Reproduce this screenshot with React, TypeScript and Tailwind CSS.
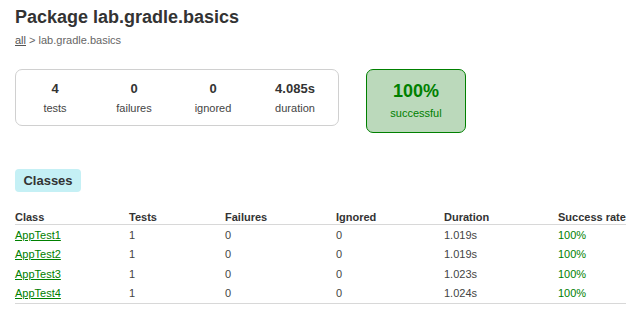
import React from 'react';

const rows = [
  { name: 'AppTest1', tests: 1, failures: 0, ignored: 0, duration: '1.019s', rate: '100%' },
  { name: 'AppTest2', tests: 1, failures: 0, ignored: 0, duration: '1.019s', rate: '100%' },
  { name: 'AppTest3', tests: 1, failures: 0, ignored: 0, duration: '1.023s', rate: '100%' },
  { name: 'AppTest4', tests: 1, failures: 0, ignored: 0, duration: '1.024s', rate: '100%' },
];

const counters = [
  { value: '4', label: 'tests', w: 'w-[78px]' },
  { value: '0', label: 'failures', w: 'w-[80px]' },
  { value: '0', label: 'ignored', w: 'w-[78px]' },
  { value: '4.085s', label: 'duration', w: 'w-[86px]' },
];

const cols = 'grid grid-cols-[114px_96px_111px_108px_114px_68px]';

const App: React.FC = () => {
  return (
    <div className="w-[640px] h-[326px] bg-white px-[15px] pt-[6px] text-[#333] font-['Liberation_Sans',Arial,sans-serif]">
      <h1 className="text-[18px] leading-[22px] font-bold text-[#333]">Package lab.gradle.basics</h1>
      <div className="mt-[5px] text-[11px] leading-[14px] text-[#666]">
        <a className="underline text-[#555]">all</a> &gt; lab.gradle.basics
      </div>

      <div className="mt-[22px] flex items-start gap-[27px]">
        <div className="w-[324px] h-[57px] border-[1.5px] border-[#d0d0d0] rounded-[7px] flex pt-[11px]">
          {counters.map((c) => (
            <div key={c.label} className={`${c.w} flex flex-col items-center`}>
              <div className="text-[13px] leading-[16px] font-bold text-[#333]">{c.value}</div>
              <div className="mt-[4px] text-[11px] leading-[14px] text-[#444]">{c.label}</div>
            </div>
          ))}
        </div>
        <div className="w-[100px] h-[64px] border-[1.5px] border-[#008000] bg-[#bbd9bb] rounded-[7px] flex flex-col items-center pt-[10px] text-[#008000]">
          <div className="text-[18px] leading-[22px] font-bold">100%</div>
          <div className="mt-[4px] text-[11px] leading-[14px]">successful</div>
        </div>
      </div>

      <div className="mt-[36px] w-[66px] h-[23px] rounded-[4px] bg-[#c5f0f5] flex items-center justify-center text-[13px] font-bold text-[#333]">
        Classes
      </div>

      <div className="mt-[13px] w-[611px] text-[11px] leading-[14px]">
        <div className={`${cols} h-[20px] items-end font-bold text-[#333] border-b border-[#d8d8d8]`}>
          <div>Class</div>
          <div>Tests</div>
          <div>Failures</div>
          <div>Ignored</div>
          <div>Duration</div>
          <div>Success rate</div>
        </div>
        <div className="border-b border-[#d8d8d8]">
          {rows.map((r) => (
            <div key={r.name} className={`${cols} h-[19.5px] items-center text-[#444]`}>
              <div>
                <a className="underline text-[#008000]">{r.name}</a>
              </div>
              <div>{r.tests}</div>
              <div>{r.failures}</div>
              <div>{r.ignored}</div>
              <div>{r.duration}</div>
              <div className="text-[#008000]">{r.rate}</div>
            </div>
          ))}
        </div>
      </div>
    </div>
  );
};

export default App;
